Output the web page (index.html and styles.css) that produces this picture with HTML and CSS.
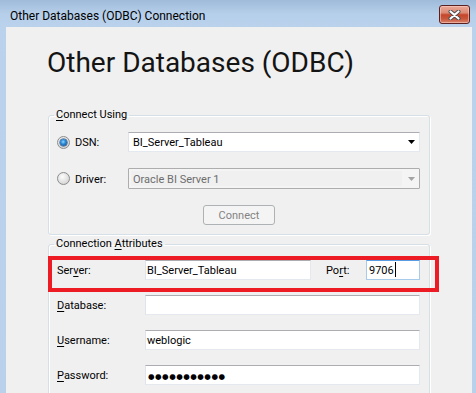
FILE: index.html
```html
<!DOCTYPE html>
<html>
<head>
<meta charset="utf-8">
<title>Other Databases (ODBC) Connection</title>
<link rel="stylesheet" href="styles.css">
</head>
<body>
<div class="window">
  <div class="titlebar">
    <span class="title">Other Databases (ODBC) Connection</span>
    <div class="close">
      <svg width="13" height="10" viewBox="0 0 13 10">
        <path d="M2.5 1.5 L10.5 8.5 M10.5 1.5 L2.5 8.5" stroke="#4a4a4a" stroke-width="4" stroke-linecap="round" fill="none"/>
        <path d="M2.5 1.5 L10.5 8.5 M10.5 1.5 L2.5 8.5" stroke="#ffffff" stroke-width="2.2" stroke-linecap="round" fill="none"/>
      </svg>
    </div>
  </div>
  <div class="client">
    <h1 class="heading">Other Databases (ODBC)</h1>

    <fieldset class="group group-using">
      <legend class="legend"><u>C</u>onnect Using</legend>
      <div class="row">
        <span class="radio checked"></span>
        <span class="radio-label">DSN:</span>
        <div class="combo">
          <span class="combo-text">BI_Server_Tableau</span>
          <span class="combo-btn">
            <svg width="7" height="4" viewBox="0 0 7 4"><path d="M0 0H7L3.5 4Z" fill="#000"/></svg>
          </span>
        </div>
      </div>
      <div class="row row-gap">
        <span class="radio"></span>
        <span class="radio-label">Driver:</span>
        <div class="combo combo-disabled">
          <span class="combo-text">Oracle BI Server 1</span>
          <span class="combo-btn">
            <svg width="7" height="4" viewBox="0 0 7 4"><path d="M0 0H7L3.5 4Z" fill="#a3a3a3"/></svg>
          </span>
        </div>
      </div>
      <div class="row row-gap row-center">
        <button class="btn" disabled>Connect</button>
      </div>
    </fieldset>

    <fieldset class="group group-attr">
      <legend class="legend">Connection <u>A</u>ttributes</legend>
      <div class="field-row">
        <span class="field-label">Ser<u>v</u>er:</span>
        <div class="textbox textbox-server">BI_Server_Tableau</div>
        <span class="port-label">Po<u>r</u>t:</span>
        <div class="textbox textbox-port">9706<span class="caret"></span></div>
      </div>
      <div class="field-row field-gap">
        <span class="field-label"><u>D</u>atabase:</span>
        <div class="textbox textbox-wide"></div>
      </div>
      <div class="field-row field-gap">
        <span class="field-label"><u>U</u>sername:</span>
        <div class="textbox textbox-wide">weblogic</div>
      </div>
      <div class="field-row field-gap">
        <span class="field-label"><u>P</u>assword:</span>
        <div class="textbox textbox-wide"><span class="dots">●●●●●●●●●●●</span></div>
      </div>
    </fieldset>
  </div>
  <div class="highlight"></div>
</div>
</body>
</html>
```

FILE: styles.css
```css
html, body {
  margin: 0;
  padding: 0;
}

body {
  font-family: Roboto, "Noto Sans", sans-serif;
  font-size: 11px;
  color: #000;
}

.window {
  position: relative;
  width: 476px;
  height: 393px;
  overflow: hidden;
  background: linear-gradient(#9fbbda 0, #b6cfea 14px, #bad2ec 27px, #b9d1ea 100%);
}

.titlebar {
  height: 27px;
  display: flex;
  align-items: flex-start;
  padding-left: 10px;
  box-sizing: border-box;
}

.title {
  font-size: 12px;
  line-height: 16px;
  margin-top: 8px;
  color: #000;
  flex: 1;
  white-space: nowrap;
}

.close {
  width: 31px;
  height: 19px;
  margin-top: 5px;
  margin-right: 6px;
  box-sizing: border-box;
  border: 1px solid #5a2121;
  border-radius: 3px;
  background: linear-gradient(#eba896 0, #dc8a76 40%, #c4462c 52%, #c9563a 75%, #d9866e 100%);
  box-shadow: inset 0 0 0 1px rgba(255, 210, 200, 0.55);
  display: flex;
  align-items: center;
  justify-content: center;
}

.close svg {
  display: block;
}

.client {
  margin: 0 4px 0 6px;
  height: 366px;
  background: #f0f0f0;
  padding: 0 42px;
  box-sizing: border-box;
  overflow: hidden;
}

.heading {
  margin: 17px 0 0 -1px;
  font-size: 28px;
  font-weight: 400;
  line-height: 38px;
  color: #141414;
  white-space: nowrap;
}

.group {
  margin: 0;
  border: 1px solid #d5dfe5;
  border-radius: 3px;
  box-shadow: inset 1px 1px 0 #fff, 1px 1px 0 #fff;
  padding: 9px 9px 9px 8px;
  min-width: 0;
}

.group-using {
  margin-top: 25px;
}

.group-attr {
  margin-top: 1px;
  padding-top: 8px;
  padding-bottom: 30px;
}

.legend {
  padding: 0 2px;
  margin-left: -3px;
  line-height: 16px;
  font-size: 11px;
  color: #000;
}

u {
  text-underline-offset: 2px;
  text-decoration-thickness: 1px;
}

.row {
  display: flex;
  align-items: center;
}

.row-gap {
  margin-top: 16px;
}

.row-center {
  justify-content: center;
  padding-left: 1px;
}

.radio {
  width: 13px;
  height: 13px;
  box-sizing: border-box;
  border-radius: 50%;
  border: 1px solid #8b8c8c;
  background: radial-gradient(circle at 40% 35%, #fdfdfd 0, #e6e6e6 45%, #c9c9c9 100%);
  margin-right: 5px;
  flex: none;
  display: flex;
  align-items: center;
  justify-content: center;
}

.radio.checked::after {
  content: "";
  width: 7px;
  height: 7px;
  border-radius: 50%;
  background: radial-gradient(circle at 45% 40%, #8fd6fb 0, #2b8ad6 40%, #0c3f80 100%);
  box-shadow: 0 0 0 0.5px #1b3e6a;
}

.radio-label {
  width: 53px;
  flex: none;
  line-height: 16px;
  padding-top: 2px;
}

.combo {
  flex: 1;
  height: 20px;
  box-sizing: border-box;
  border: 1px solid;
  border-color: #abadb3 #e3e9ef #e3e9ef #e2e3ea;
  background: #fff;
  display: flex;
  align-items: center;
}

.combo-text {
  flex: 1;
  padding-left: 4px;
  padding-top: 2px;
  line-height: 16px;
  white-space: nowrap;
}

.combo-btn {
  width: 17px;
  align-self: stretch;
  display: flex;
  align-items: center;
  justify-content: center;
}

.combo-btn svg {
  display: block;
  margin-left: 1px;
}

.combo-disabled {
  height: 21px;
  border: 1px solid #adadad;
  background: #f4f4f4;
  border-radius: 1px;
}

.combo-disabled .combo-text {
  align-self: stretch;
  display: flex;
  align-items: center;
  background: #f0f0f0;
  margin: 2px 0 2px 2px;
  padding-left: 2px;
  padding-top: 2px;
  box-sizing: border-box;
  color: #6d6d6d;
}

.btn {
  width: 72px;
  height: 20px;
  box-sizing: border-box;
  border: 1px solid #adb2b5;
  border-radius: 3px;
  background: #f4f4f4;
  color: #838383;
  font-family: inherit;
  font-size: 11px;
  line-height: 16px;
  padding: 2px 0 0;
}

.field-row {
  display: flex;
  align-items: center;
}

.field-gap {
  margin-top: 15px;
}

.field-label {
  width: 88px;
  flex: none;
  line-height: 16px;
  padding-top: 2px;
}

.textbox {
  height: 20px;
  box-sizing: border-box;
  border: 1px solid;
  border-color: #abadb3 #e3e9ef #e3e9ef #e2e3ea;
  background: #fff;
  padding: 1px 0 0 1px;
  line-height: 18px;
  white-space: nowrap;
}

.textbox-server {
  width: 166px;
  flex: none;
}

.port-label {
  margin-left: 15px;
  width: 40px;
  flex: none;
  line-height: 16px;
  padding-top: 2px;
}

.textbox-port {
  width: 54px;
  flex: none;
  border-color: #569de5 #a6cbeb #a6cbeb #a6cbeb;
  padding-left: 2px;
}

.caret {
  display: inline-block;
  width: 1px;
  height: 15px;
  background: #000;
  margin-left: 1px;
  vertical-align: -3px;
}

.textbox-wide {
  flex: 1;
}

.dots {
  font-family: "DejaVu Sans", sans-serif;
  font-size: 7.5px;
  letter-spacing: 0.5px;
  padding-left: 1px;
}

.highlight {
  position: absolute;
  left: 48px;
  top: 256px;
  width: 391px;
  height: 36px;
  box-sizing: border-box;
  border: 4px solid #ed1c24;
  pointer-events: none;
}
```
